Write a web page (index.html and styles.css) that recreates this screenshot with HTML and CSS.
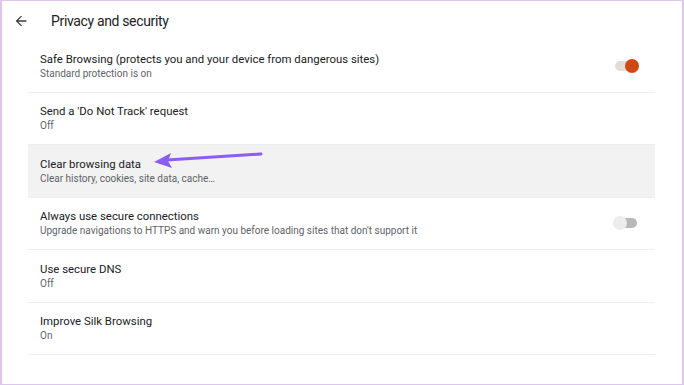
FILE: index.html
```html
<!DOCTYPE html>
<html lang="en">
	<head>
		<meta charset="UTF-8" />
		<meta name="viewport" content="width=device-width, initial-scale=1.0" />
		<title>Privacy and security</title>
		<link rel="stylesheet" href="styles.css">
	</head>
	<body>
		<div id="frame">
			<div class="header">
				<svg class="back" width="16" height="16" viewBox="0 0 24 24">
					<path d="M20 11H7.83l5.59-5.59L12 4l-8 8 8 8 1.41-1.41L7.83 13H20v-2z" fill="#3c3c3c" />
				</svg>
				<span class="title">Privacy and security</span>
			</div>

			<div class="list">
				<div class="row">
					<div class="texts">
						<div class="label">Safe Browsing (protects you and your device from dangerous sites)</div>
						<div class="sub">Standard protection is on</div>
					</div>
					<div class="toggle on"><span class="knob"></span></div>
				</div>
				<div class="row">
					<div class="texts">
						<div class="label">Send a 'Do Not Track' request</div>
						<div class="sub">Off</div>
					</div>
				</div>
				<div class="row active">
					<div class="texts">
						<div class="label">Clear browsing data</div>
						<div class="sub">Clear history, cookies, site data, cache…</div>
					</div>
					<!-- annotation arrow -->
					<svg class="pointer" width="112" height="20" viewBox="0 0 112 20">
						<path d="M108 3 L14 9" stroke="#8b5cf6" stroke-width="3" stroke-linecap="round" />
						<path d="M1 11 L18 2 L15 10 L19 17 Z" fill="#8b5cf6" />
					</svg>
				</div>
				<div class="row">
					<div class="texts">
						<div class="label">Always use secure connections</div>
						<div class="sub">Upgrade navigations to HTTPS and warn you before loading sites that don't support it</div>
					</div>
					<div class="toggle off"><span class="knob"></span></div>
				</div>
				<div class="row">
					<div class="texts">
						<div class="label">Use secure DNS</div>
						<div class="sub">Off</div>
					</div>
				</div>
				<div class="row">
					<div class="texts">
						<div class="label">Improve Silk Browsing</div>
						<div class="sub">On</div>
					</div>
				</div>
			</div>
		</div>
	</body>
</html>
```

FILE: styles.css
```css
html,
body {
	margin: 0;
	height: 100%;
	background: #ffffff;
	font-family: Roboto, "Liberation Sans", sans-serif;
}

#frame {
	box-sizing: border-box;
	height: 385px;
	width: 684px;
	border: 1px solid #dcc6ee;
	border-left-width: 2px;
	border-right-width: 2px;
}

.header {
	display: flex;
	align-items: center;
	height: 39px;
	padding-left: 11px;
}

.back {
	margin-right: 22px;
}

.title {
	font-size: 14px;
	letter-spacing: -0.35px;
	color: #202124;
}

.list {
	margin-left: 26px;
	width: 627px;
}

.row {
	position: relative;
	display: flex;
	align-items: center;
	height: 52.5px;
	box-sizing: border-box;
	padding: 0 12px;
	border-bottom: 1px solid #eeeeee;
}

.row.active {
	background: #f2f2f2;
}

.texts {
	flex: 1;
}

.label {
	font-size: 11.4px;
	color: #202124;
	line-height: 16px;
}

.sub {
	font-size: 10px;
	color: #5f6368;
	line-height: 14px;
}

.toggle {
	position: relative;
	width: 22px;
	height: 10px;
	border-radius: 5px;
	margin-right: 6px;
}

.toggle .knob {
	position: absolute;
	top: -2px;
	width: 14px;
	height: 14px;
	border-radius: 50%;
}

.toggle.on {
	background: #e3dcd8;
}

.toggle.on .knob {
	right: -2px;
	background: #cf4a12;
}

.toggle.off {
	background: #b7b7b7;
}

.toggle.off .knob {
	left: -2px;
	background: #ececec;
}

.pointer {
	position: absolute;
	left: 125px;
	top: 6px;
}
```
